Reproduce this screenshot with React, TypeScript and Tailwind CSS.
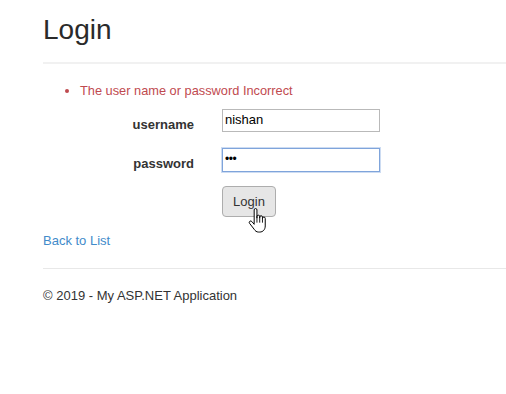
import React from "react";

function HandCursor() {
  return (
    <svg width="21" height="28" viewBox="0 0 19 25" className="absolute left-[25px] top-[21px]">
      <path
        d="M6.5 14.5 V2.5 a1.25 1.25 0 0 1 2.5 0 V10 V8.5 a1.25 1.25 0 0 1 2.5 0 V10 V9 a1.25 1.25 0 0 1 2.5 0 V10.5 V10.2 a1.25 1.25 0 0 1 2.5 0 V17 c0 3.2 -2 5.5 -5 5.5 H10.5 c-2 0 -3 -1 -4 -2.5 L2.3 14.6 a1.3 1.3 0 0 1 2.1 -1.6 L6.5 15.5 Z"
        fill="#fff"
        stroke="#000"
        strokeWidth="0.9"
        strokeLinejoin="round"
      />
      <path d="M9 10 V14 M11.5 10 V14 M14 10.5 V14" stroke="#000" strokeWidth="0.8" />
    </svg>
  );
}

export default function App() {
  return (
    <div className="w-[506px] h-[394px] bg-white overflow-hidden font-['Liberation_Sans',Arial,sans-serif] text-[#333]">
      <div className="pl-[43px]">
        <h2 className="pt-[14px] text-[28px] leading-[31px] font-normal text-[#2a2a2a]">Login</h2>
      </div>
      <div className="ml-[43px] mt-[17px] h-[2px] bg-[#f1f1f1]" />
      <div className="pl-[43px]">
        <ul className="mt-[18px] list-disc pl-[37px] text-[12.8px] leading-[18px] text-[#bf4a4f] marker:text-[#bf4a4f]">
          <li>The user name or password Incorrect</li>
        </ul>
        <div className="mt-[9px] flex items-start">
          <label className="w-[151px] pt-[8px] text-right text-[13px] leading-[16px] font-bold text-[#333]">username</label>
          <div className="ml-[28px] h-[23px] w-[158px] border border-[#b9b9b9] bg-white px-[2px] text-[13px] leading-[20px] text-black">
            nishan
          </div>
        </div>
        <div className="mt-[15px] flex items-start">
          <label className="w-[151px] pt-[8px] text-right text-[13px] leading-[16px] font-bold text-[#333]">password</label>
          <div className="ml-[28px] h-[24px] w-[158px] border border-[#7fa4db] shadow-[0_0_0_1px_#cddcf2] bg-white px-[2px] text-[12px] leading-[21px] text-black tracking-[-0.5px]">
            •••
          </div>
        </div>
        <div className="mt-[14px] ml-[179px] relative w-[54px]">
          <button className="h-[31px] w-[54px] rounded-[4px] border border-[#adadad] bg-[#e6e6e6] text-[13px] text-[#333]">
            Login
          </button>
          <HandCursor />
        </div>
        <div className="mt-[15px] text-[13px] leading-[18px]">
          <a className="text-[#428bca]">Back to List</a>
        </div>
      </div>
      <div className="ml-[43px] mt-[18px] h-[1px] bg-[#e8e8e8]" />
      <div className="pl-[43px] mt-[18px] text-[13px] leading-[18px] text-[#333]">© 2019 - My ASP.NET Application</div>
    </div>
  );
}
